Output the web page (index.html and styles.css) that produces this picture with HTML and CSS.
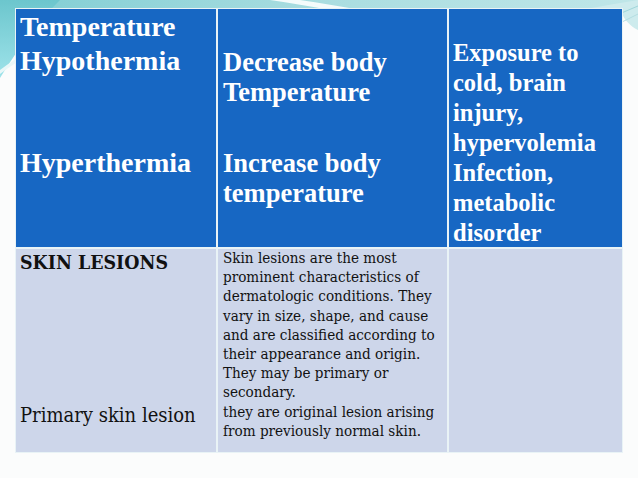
FILE: index.html
```html
<!DOCTYPE html>
<html>
<head>
<meta charset="utf-8">
<link rel="stylesheet" href="styles.css">
</head>
<body>
<div class="slide">
  <svg class="deco" width="638" height="478" viewBox="0 0 638 478" aria-hidden="true">
    <defs>
      <linearGradient id="band" x1="0" y1="0" x2="1" y2="0">
        <stop offset="0" stop-color="#7fcdd3"/>
        <stop offset="0.5" stop-color="#a9dde0"/>
        <stop offset="1" stop-color="#bfe6e8"/>
      </linearGradient>
      <linearGradient id="swoop" x1="0" y1="0" x2="0" y2="1">
        <stop offset="0" stop-color="#6cc6cd"/>
        <stop offset="1" stop-color="#9fe3ea"/>
      </linearGradient>
    </defs>
    <rect x="0" y="0" width="638" height="14" fill="url(#band)"/>
    <path d="M0 0 H60 C40 20 20 45 0 78 Z" fill="url(#swoop)"/>
    <path d="M0 70 C10 62 20 56 30 52 L30 56 C20 60 10 66 0 74 Z" fill="#e9f7f8"/>
    <path d="M270 0 L300 0 C320 3 340 6 360 10 L330 10 C310 6 290 3 270 0 Z" fill="#f4fbfb"/>
    <path d="M560 14 C590 8 615 4 638 0 L638 30 C630 26 625 20 622 14 Z" fill="#cdebed"/>
    <path d="M600 22 L638 6" stroke="#9fd5da" stroke-width="1"/>
    <path d="M610 28 L638 14" stroke="#b3dde1" stroke-width="1"/>
  </svg>
  <div class="grid">
    <div class="cell head c1">
      <div>Temperature</div>
      <div>Hypothermia</div>
      <div class="gap2">Hyperthermia</div>
    </div>
    <div class="cell head c2">
      <div>Decrease body<br>Temperature</div>
      <div class="para">Increase body<br>temperature</div>
    </div>
    <div class="cell head c3">
      <div class="lines">Exposure to<br>cold, brain<br>injury,<br>hypervolemia<br>Infection,<br>metabolic<br>disorder</div>
    </div>
    <div class="cell body b1">
      <div class="skin">SKIN LESIONS</div>
      <div class="primary">Primary skin lesion</div>
    </div>
    <div class="cell body b2">
      Skin lesions are the most<br>prominent characteristics of<br>dermatologic conditions. They<br>vary in size, shape, and cause<br>and are classified according to<br>their appearance and origin.<br>They may be primary or<br>secondary.<br>they are original lesion arising<br>from previously normal skin.
    </div>
    <div class="cell body b3"></div>
  </div>
</div>
</body>
</html>
```

FILE: styles.css
```css
html, body {
  margin: 0;
  padding: 0;
}
body {
  background: #fbfcfc;
}
.slide {
  position: relative;
  width: 638px;
  height: 478px;
  overflow: hidden;
  background: #fbfcfc;
}
.deco {
  position: absolute;
  left: 0;
  top: 0;
}
.grid {
  position: relative;
  margin: 8px 0 0 15px;
  width: 608px;
  box-sizing: border-box;
  display: grid;
  grid-template-columns: 200px 229px 173px;
  grid-template-rows: 238px 203px;
  gap: 2px;
  padding: 1px;
  background: #e9f3f6;
}
.cell {
  box-sizing: border-box;
  overflow: hidden;
}
.head {
  background: #1767c3;
  color: #ffffff;
  font-family: "Liberation Serif", "Times New Roman", serif;
  font-weight: bold;
}
.body {
  background: #cdd6ea;
  color: #111111;
  font-family: "DejaVu Serif Condensed", "DejaVu Serif", "Liberation Serif", serif;
  font-stretch: condensed;
}
.c1 {
  font-size: 28px;
  line-height: 34px;
  padding: 1px 0 0 4px;
}
.c1 .gap2 {
  margin-top: 68px;
}
.c2 {
  font-size: 26.5px;
  line-height: 30.5px;
  padding: 37.5px 0 0 5px;
}
.c2 .para {
  margin-top: 40px;
}
.c3 {
  font-size: 24.5px;
  line-height: 30px;
  padding: 28.7px 0 0 4px;
}
.lines {
  white-space: nowrap;
}
.b1 {
  padding: 2px 0 0 4px;
}
.skin {
  font-weight: bold;
  font-size: 19.4px;
  line-height: 24px;
}
.primary {
  font-size: 20px;
  line-height: 24px;
  margin-top: 128px;
}
.b2 {
  font-size: 15.1px;
  line-height: 19.2px;
  padding: 0 0 0 5px;
  white-space: nowrap;
}
```
